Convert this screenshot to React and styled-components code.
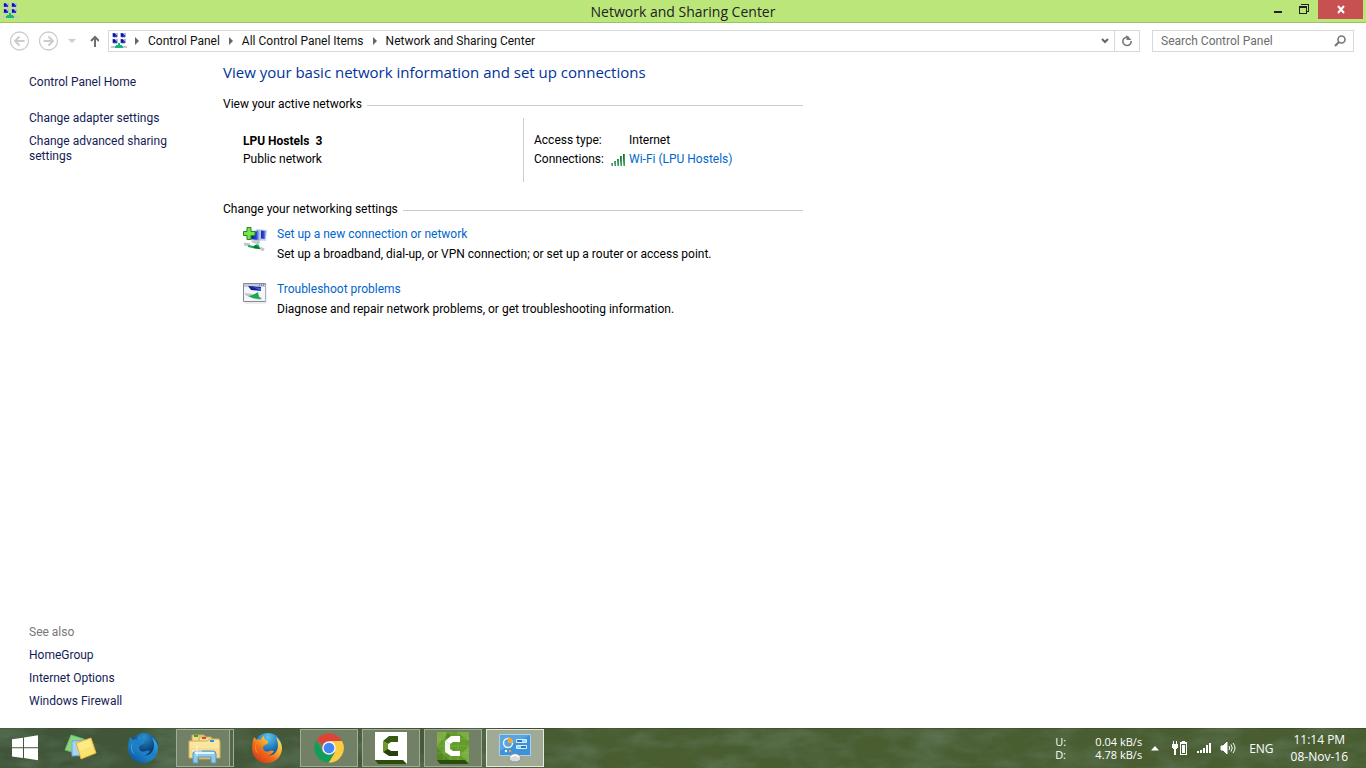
import React from 'react'
import styled, { createGlobalStyle } from 'styled-components'

const tasks = [
  { name: 'Sticky Notes', icon: <StickyIcon /> },
  { name: 'Firefox Developer', icon: <FirefoxIcon dev /> },
  { name: 'File Explorer', icon: <ExplorerIcon />, open: true, stacked: true },
  { name: 'Firefox', icon: <FirefoxIcon /> },
  { name: 'Chrome', icon: <ChromeIcon />, open: true },
  { name: 'Camtasia', icon: <CamtasiaIcon />, open: true },
  { name: 'Camtasia Recorder', icon: <CamtasiaIcon green />, open: true },
  { name: 'Control Panel', icon: <PanelIcon />, open: true, active: true },
]

export default function App() {
  return (
    <Page>
      <GlobalStyle />
      <TitleBar>
        <TitleSide>
          <NetworkIcon />
        </TitleSide>
        <Title>Network and Sharing Center</Title>
        <TitleSide $end>
          <WindowButton aria-label='Minimize'>
            <svg width='26' height='19' shapeRendering='crispEdges'>
              <path d='M10 11h8v2h-8z' fill='#222' />
            </svg>
          </WindowButton>
          <WindowButton aria-label='Restore'>
            <svg width='26' height='19' shapeRendering='crispEdges'>
              <path d='M11 4h8v8h-2v-1h1V5h-7zM9 6h8v8H9zM10 8v5h6V8z' fill='#222' fillRule='evenodd' />
            </svg>
          </WindowButton>
          <WindowButton $close aria-label='Close'>
            <svg width='45' height='19'>
              <path d='M20 6l6 7M26 6l-6 7' stroke='#fff' strokeWidth='2' />
            </svg>
          </WindowButton>
        </TitleSide>
      </TitleBar>

      <NavBar>
        <NavButton aria-label='Back'>
          <svg width='20' height='20' fill='none' stroke='#ccc'>
            <circle cx='9.5' cy='10' r='9' strokeWidth='1.3' />
            <path d='M14.500 10H6M9.500 5.5L5 10l4.500 4.5' strokeWidth='2' />
          </svg>
        </NavButton>
        <NavButton aria-label='Forward'>
          <svg width='20' height='20' fill='none' stroke='#ccc'>
            <circle cx='9.5' cy='10' r='9' strokeWidth='1.3' />
            <path d='M4.500 10H13M9.500 5.5L14 10l-4.500 4.5' strokeWidth='2' />
          </svg>
        </NavButton>
        <NavButton aria-label='Recent locations'>
          <svg width='8' height='4'>
            <path d='M0 0h8L4 4z' fill='#ccc' />
          </svg>
        </NavButton>
        <NavButton $up aria-label='Up'>
          <svg width='10' height='12' fill='none' stroke='#6e6e6e' strokeWidth='2'>
            <path d='M6 12V2M2 6l4-4 4 4' />
          </svg>
        </NavButton>
        <Address>
          <NetworkIcon />
          <Crumb name='Control Panel' />
          <Crumb name='All Control Panel Items' />
          <Crumb name='Network and Sharing Center' />
          <Spacer />
          <AddressButton aria-label='Previous locations'>
            <svg width='8' height='6' fill='none' stroke='#666' strokeWidth='2'>
              <path d='M1 1l3 3 3-3' />
            </svg>
          </AddressButton>
          <AddressButton $line aria-label='Refresh'>
            <svg width='12' height='12' fill='none' stroke='#777' strokeWidth='1.6'>
              <path d='M8 2.600A4.200 4.200 0 1 0 10.200 6' />
              <path d='M5.500 0v5h5z' fill='#777' stroke='none' />
            </svg>
          </AddressButton>
        </Address>
        <Search>
          <SearchInput type='text' aria-label='Search Control Panel' placeholder='Search Control Panel' />
          <svg width='12' height='12' fill='none' stroke='#777'>
            <circle cx='7.5' cy='4.5' r='3.5' strokeWidth='1.6' />
            <path d='M5 7L1 11' strokeWidth='2.2' />
          </svg>
        </Search>
      </NavBar>

      <Content>
        <Sidebar>
          <SideGroup>
            <SideLink href='#' $first>Control Panel Home</SideLink>
            <SideLink href='#'>Change adapter settings</SideLink>
            <SideLink href='#'>Change advanced sharing settings</SideLink>
          </SideGroup>
          <SideGroup>
            <SeeAlso>See also</SeeAlso>
            <SideLink href='#'>HomeGroup</SideLink>
            <SideLink href='#'>Internet Options</SideLink>
            <SideLink href='#'>Windows Firewall</SideLink>
          </SideGroup>
        </Sidebar>

        <Main>
          <Heading>View your basic network information and set up connections</Heading>
          <SectionTitle>View your active networks</SectionTitle>
          <Network>
            <NetworkName>
              <b>LPU Hostels&nbsp; 3</b>
              <span>Public network</span>
            </NetworkName>
            <Details>
              <dt>Access type:</dt>
              <dd>Internet</dd>
              <dt>Connections:</dt>
              <dd>
                <Wifi />
                <BlueLink href='#'>Wi-Fi (LPU Hostels)</BlueLink>
              </dd>
            </Details>
          </Network>

          <SectionTitle>Change your networking settings</SectionTitle>
          <Option>
            <NewConnectionIcon />
            <div>
              <BlueLink href='#'>Set up a new connection or network</BlueLink>
              <OptionText>Set up a broadband, dial-up, or VPN connection; or set up a router or access point.</OptionText>
            </div>
          </Option>
          <Option>
            <TroubleshootIcon />
            <div>
              <BlueLink href='#'>Troubleshoot problems</BlueLink>
              <OptionText>Diagnose and repair network problems, or get troubleshooting information.</OptionText>
            </div>
          </Option>
        </Main>
      </Content>

      <Taskbar>
        <Wallpaper>
          <filter id='grain' x='0' y='0' width='100%' height='100%' colorInterpolationFilters='sRGB'>
            <feTurbulence type='fractalNoise' baseFrequency='.02 .05' numOctaves='6' seed='4' />
            <feColorMatrix values='0 0 0 0 .42  0 0 0 0 .52  0 0 0 0 .42  1.6 0 0 0 -.62' />
          </filter>
          <rect width='100%' height='100%' filter='url(#grain)' />
        </Wallpaper>
        <StartButton aria-label='Start'>
          <svg width='26' height='26' fill='#fff'>
            <path d='M0 4.200l11-1.500v9.500H0zM12 2.500L26 .3v11.900H12zM0 13.200h11v9.700L0 21.500zM12 13.200h14v12L12 23z' />
          </svg>
        </StartButton>
        {tasks.map((task) => (
          <Task key={task.name} aria-label={task.name} $open={task.open} $active={task.active}>
            {task.icon}
            {task.stacked && <Stack />}
          </Task>
        ))}
        <Spacer />
        <Speed>
          <span>U:</span>
          <span>0.04 kB/s</span>
          <span>D:</span>
          <span>4.78 kB/s</span>
        </Speed>
        <Tray>
          <svg width='8' height='5'>
            <path d='M4 0l4 4.500H0z' fill='#fff' />
          </svg>
          <svg width='16' height='16' fill='#fff' shapeRendering='crispEdges'>
            <path d='M1 1h1v3h2V1h1v3h1v4H5v1H4v6H2V9H1V8H0V4h1z' />
            <path d='M10 1h3v1h2v13H8V2h2zM9 4v10h5V4z' fillRule='evenodd' />
            <path d='M10 5h3v8h-3z' />
          </svg>
          <svg width='16' height='12' fill='#fff' shapeRendering='crispEdges'>
            <path d='M1 9h2v2H1zM4 8h2v3H4zM7 6h2v5H7zM10 3h2v8h-2zM13 1h2v10h-2z' />
          </svg>
          <svg width='16' height='14' fill='none' stroke='#fff'>
            <path d='M1 5h2l4-4v12L3 9H1z' fill='#fff' />
            <path d='M9 5q1.500 2 0 4M11 3.500q2.500 3.500 0 7M13 2q4 5 0 10' />
          </svg>
        </Tray>
        <Language>ENG</Language>
        <Clock>
          <span>11:14 PM</span>
          <span>08-Nov-16</span>
        </Clock>
      </Taskbar>
    </Page>
  )
}

function Crumb({ name }) {
  return (
    <>
      <svg width='4' height='8'>
        <path d='M0 0l4 4-4 4z' fill='#666' />
      </svg>
      <CrumbLink href='#'>{name}</CrumbLink>
    </>
  )
}

function NetworkIcon() {
  return (
    <svg width='16' height='16' shapeRendering='crispEdges'>
      {[[1, 0], [9, 0], [1, 6], [9, 6]].map(([x, y]) => (
        <g key={`${x}-${y}`}>
          <path d={`M${x} ${y}h6v4h-6z`} fill='#b3b6cc' />
          <path d={`M${x + 1} ${y}h4v4h-4z`} fill='#2a36c4' />
          <path d={`M${x + 1} ${y + 1}h2v2h-2z`} fill='#0c109c' />
          <path d={`M${x + 3} ${y}h2v2h-1v-1h-1z`} fill='#a9b6f0' />
          <path d={`M${x + 1} ${y + 4}h4v1h-4z`} fill='#c9cad4' />
        </g>
      ))}
      <path d='M0 13h16v2H0z' fill='#c6c8ce' />
      <path d='M7 10h2v2h2v1h1v2H4v-2h1v-1h2z' fill='#12b878' />
    </svg>
  )
}

function Wifi() {
  return (
    <svg width='14' height='12' shapeRendering='crispEdges'>
      <defs>
        <linearGradient id='bars' x1='0' y1='0' x2='0' y2='12' gradientUnits='userSpaceOnUse'>
          <stop stopColor='#126b36' />
          <stop offset='.4' stopColor='#1d7a41' />
          <stop offset='1' stopColor='#8fd3a2' />
        </linearGradient>
      </defs>
      <path d='M0 9h2v3H0zM3 7h2v5H3zM6 5h2v7H6zM9 2h2v10H9zM12 0h2v12h-2z' fill='url(#bars)' />
      <path d='M1 9v3M4 7v5M7 5v7M10 2v10M13 0v12' stroke='#3d9a5c' />
    </svg>
  )
}

function NewConnectionIcon() {
  return (
    <svg width='24' height='24'>
      <defs>
        <linearGradient id='screen' x2='1'>
          <stop stopColor='#0b1690' />
          <stop offset='.7' stopColor='#263fd0' />
          <stop offset='1' stopColor='#8fb2f5' />
        </linearGradient>
      </defs>
      <path d='M13 2l11 1-1 11-9-1z' fill='#c9d4e8' />
      <path d='M14 3l9 1-1 8-8-1z' fill='url(#screen)' />
      <path d='M6 4l12-1v10l-2 2-9-2z' fill='#b8c4dc' />
      <path d='M7 5l9-1v9l-8-1z' fill='url(#screen)' />
      <path d='M8 14l9 1-1 2-6-1z' fill='#bcbfc8' />
      <path d='M1 17l6 1M17 21l4 2' stroke='#c2c5ca' strokeWidth='3' />
      <path d='M5 18l6 1 3-2 2 1 1 4-8-1-4-1z' fill='#19b452' />
      <path d='M12 18l5 3v1l-7-1z' fill='#087535' />
      <path d='M4 .5h4v4h4v4H8v4H4v-4H.5v-4H4z' fill='#7de04c' stroke='#218a1c' />
    </svg>
  )
}

function TroubleshootIcon() {
  return (
    <svg width='24' height='24' viewBox='0 -1 24 24'>
      <path d='M.5.5h22v18H.5z' fill='#f5f6f8' stroke='#7f8a96' />
      <path d='M1 1h21v3H1z' fill='#c4cbd5' />
      <path d='M16 2h1M18 2h1M20 2h1' stroke='#33519b' />
      <path d='M5 3l13 1v4l-10-1z' fill='#16209c' />
      <path d='M10 4l8 1v3z' fill='#405ed9' />
      <path d='M2 10l9 1 8 4-1 2-7-1-9-4z' fill='#c3c8ce' />
      <path d='M5 13l5-1 5-3 1 5 2 1-1 1-7-1z' fill='#18ab4e' />
      <path d='M2 20h21V2' fill='none' stroke='#ddd' />
    </svg>
  )
}

function StickyIcon() {
  return (
    <svg width='34' height='28'>
      <path d='M7 1l13 4-5 15L1 16z' fill='#8bd780' stroke='#6bb764' />
      <path d='M8 7l14-1 1 15-15 1z' fill='#a7d3f5' stroke='#6ea9d8' />
      <path d='M12 9l15-5 5 15-15 6z' fill='#fbe36d' stroke='#d9b63c' />
      <path d='M13 10l13-5 2 7-12 5z' fill='#fff09b' opacity='.6' />
    </svg>
  )
}

function FirefoxIcon({ dev }) {
  const id = dev ? 'dev' : 'fox'
  return (
    <svg width='32' height='32' viewBox='0 0 32 32'>
      <defs>
        <radialGradient id={`${id}-globe`} cx='.5' cy='.15' r='.85'>
          <stop stopColor={dev ? '#2a93cf' : '#5dc7ed'} />
          <stop offset='.6' stopColor={dev ? '#0b3f7b' : '#1667ad'} />
          <stop offset='1' stopColor='#0a2f6b' />
        </radialGradient>
        <linearGradient id={`${id}-fur`} x1='.9' y1='.1' x2='.2' y2='.9'>
          <stop stopColor={dev ? '#3fa9df' : '#ffe05a'} />
          <stop offset='.4' stopColor={dev ? '#1d7fc4' : '#f8a52b'} />
          <stop offset='.65' stopColor={dev ? '#1d7fc4' : '#ee6a1c'} />
          <stop offset='1' stopColor={dev ? '#0c5da5' : '#d83f17'} />
        </linearGradient>
      </defs>
      <circle cx='17' cy='15' r='14' fill={`url(#${id}-globe)`} />
      <path
        d='M3 5c1 1 2 2 3 3 1-1 3-1 4 0 0-2 1-3 3-4 0 3 1 4 4 5 1 2-1 3-3 4-3 1-2 5 0 6 4 2 5-2 9 0-2 3-4 5-8 4 7 2 12-3 12-10 0-3-1-6-2-8 4 3 6 7 6 11 0 8-6 15-15 15S1 24 1 16c0-4 1-8 2-11z'
        fill={`url(#${id}-fur)`}
      />
      <path d='M6 10c-2 4-1 9 2 12-4-1-6-7-2-12z' fill={dev ? '#58b4e4' : '#f9a338'} opacity='.6' />
    </svg>
  )
}

function ExplorerIcon() {
  return (
    <svg width='34' height='31'>
      <path d='M4 2h12l2 3v20H4z' fill='#f4dc88' stroke='#c9a64d' />
      <path d='M11 4h12l2 3v19H11z' fill='#f6e19a' stroke='#c9a64d' />
      <path d='M6 2h4v2H6z' fill='#24a645' />
      <path d='M14 4h4v2h-4z' fill='#d84731' />
      <path d='M1 8h18l3-2h9l1 3v16H1z' fill='#f9e6a0' stroke='#d0ad57' />
      <path d='M22 7h4v2h-4z' fill='#2c94df' />
      <path d='M2 15h29v10H2z' fill='#efcd72' opacity='.4' />
      <path d='M5 30V21q0-3 3-3h17q3 0 3 3v9h-5v-6H10v6z' fill='#8ecbef' stroke='#5796c2' />
      <path d='M7 20h19' stroke='#dff4ff' strokeWidth='2' />
      <path d='M9 13v10M4 18h10' stroke='#fff' opacity='.8' />
    </svg>
  )
}

function ChromeIcon() {
  return (
    <svg width='30' height='30' viewBox='0 0 30 30'>
      <path d='M15 15L2.300 7.500A14.700 14.700 0 0 1 27.700 7.500z' fill='#dc4437' />
      <path d='M15 8h13a14.700 14.700 0 0 1-13.500 21.700L21 19z' fill='#fdcd40' />
      <path d='M2.300 7.500L9 19l6 3-.5 7.700A14.700 14.700 0 0 1 2.300 7.500z' fill='#129d58' />
      <path d='M9 19q6 5 12 0l-6.500 10.700z' fill='#129d58' />
      <circle cx='15' cy='15' r='6.800' fill='#f3f3f3' />
      <circle cx='15' cy='15' r='5.300' fill='#4285f4' />
    </svg>
  )
}

function CamtasiaIcon({ green }) {
  return (
    <svg width='32' height='32'>
      <path d='M0 28h28l4 4H3z' fill='#2c4c0b' />
      <path d='M0 0h32v32l-4-4H0z' fill={green ? '#649c2b' : '#fff'} />
      {green && (
        <>
          <path d='M0 0h12L0 14zM20 0h12v9zM32 14v16l-9-7z' fill='#8dbb55' opacity='.6' />
          <path d='M0 16l12 12H0zM10 0l7 5-9 6z' fill='#477d1b' opacity='.6' />
          <path d='M0 7h32M0 14h32M0 21h32M7 0v28M14 0v28M21 0v28' stroke='#9dc96c' opacity='.3' />
        </>
      )}
      <path d='M23 4v6h-7l-3 2-5-3 6-5z' fill={green ? '#fff' : '#375b12'} />
      <path d='M8 9l5 3v6l-5 2z' fill={green ? '#f2f5ed' : '#6d9a2b'} />
      <path d='M8 20l5-3 3 2h7v5h-9z' fill={green ? '#fff' : '#26420c'} />
    </svg>
  )
}

function PanelIcon() {
  return (
    <svg width='32' height='30'>
      <path d='M.5 1.500h31v21H.5z' fill='#3f92d7' stroke='#a6d2f0' />
      <path d='M1 2h30L1 18z' fill='#75b7e8' opacity='.5' />
      <circle cx='9' cy='10' r='4.500' fill='none' stroke='#e4f4ff' strokeWidth='1.500' />
      <path d='M9 4a6 6 0 0 1 5 6H9z' fill='#f9a62c' />
      <path d='M17.500 6.500h10v3h-10zM17.500 12.500h10v3h-10z' fill='#287ac0' stroke='#d8efff' />
      <path d='M23 7h4v2h-4zM18 13h4v2h-4z' fill='#9ed8fa' />
      <circle cx='7' cy='18' r='1.200' fill='#fff' />
      <circle cx='11' cy='18' r='1.200' fill='#f9a62c' />
      <ellipse cx='16' cy='25' rx='6' ry='4' fill='#d9dcde' stroke='#8d9498' />
      <path d='M12 24q4-4 8 0' fill='none' stroke='#fff' strokeWidth='1.500' />
    </svg>
  )
}

const GlobalStyle = createGlobalStyle`
  * {
    box-sizing: border-box;
  }
  body {
    margin: 0;
    background: #fff;
    color: #000;
    font: 12px/15px Roboto, 'Open Sans', sans-serif;
  }
  a {
    text-decoration: none;
  }
  button {
    border: 0;
    padding: 0;
    background: none;
    display: flex;
    align-items: center;
    justify-content: center;
  }
  svg {
    display: block;
    flex: none;
  }
`

const Page = styled.div`
  min-height: 100vh;
  display: flex;
  flex-direction: column;
`

const Spacer = styled.div`
  flex: 1;
`

const TitleBar = styled.header`
  display: grid;
  grid-template-columns: 1fr auto 1fr;
  height: 23px;
  background: #bbe77a;
  border-bottom: 1px solid #9cc261;
`

const TitleSide = styled.div`
  display: flex;
  justify-content: ${(p) => (p.$end ? 'flex-end' : 'flex-start')};
  padding: ${(p) => (p.$end ? '0 3px 0 0' : '3px 2px 0')};
`

const Title = styled.h1`
  margin: 0;
  font-family: 'Open Sans', sans-serif;
  font-size: 14px;
  font-weight: 400;
  line-height: 23px;
  color: #222;
`

const WindowButton = styled.button`
  height: 19px;
  background: ${(p) => (p.$close ? '#c75050' : 'none')};
  margin-left: ${(p) => (p.$close ? '2px' : '0')};
`

const NavBar = styled.nav`
  display: flex;
  align-items: center;
  height: 36px;
  padding: 0 12px 0 10px;
  gap: 9px;
`

const NavButton = styled.button`
  min-width: ${(p) => (p.$up ? '10px' : '8px')};
  margin-left: ${(p) => (p.$up ? '4px' : '0')};
`

const Address = styled.div`
  display: flex;
  align-items: center;
  flex: 1;
  height: 22px;
  margin-right: 3px;
  padding-left: 2px;
  border: 1px solid #d9d9d9;

  & > svg + svg {
    margin-left: 8px;
  }
`

const CrumbLink = styled.a`
  margin: 0 9px;
  color: #111;
`

const AddressButton = styled.button`
  width: ${(p) => (p.$line ? '25px' : '18px')};
  height: 20px;
  border-left: ${(p) => (p.$line ? '1px solid #d9d9d9' : '0')};
`

const Search = styled.div`
  display: flex;
  align-items: center;
  width: 202px;
  height: 22px;
  padding: 0 7px 0 8px;
  border: 1px solid #d9d9d9;
`

const SearchInput = styled.input`
  flex: 1;
  min-width: 0;
  padding: 0;
  border: 0;
  outline: 0;
  font: inherit;
  &::placeholder {
    color: #6d6d6d;
    opacity: 1;
  }
`

const Content = styled.div`
  display: flex;
  flex: 1;
`

const Sidebar = styled.aside`
  display: flex;
  flex-direction: column;
  justify-content: space-between;
  width: 223px;
  padding: 16px 40px 19px 29px;
`

const SideGroup = styled.div`
  display: flex;
  flex-direction: column;
  align-items: flex-start;
  gap: 8px;
`

const SideLink = styled.a`
  color: #151c55;
  margin-bottom: ${(p) => (p.$first ? '13px' : '0')};
`

const SeeAlso = styled.span`
  color: #777;
`

const Main = styled.main`
  flex: 1;
  max-width: 580px;
  padding-top: 4px;
`

const Heading = styled.h2`
  margin: 0 0 15px;
  font-family: 'Open Sans', sans-serif;
  font-size: 15px;
  font-weight: 400;
  line-height: 18px;
  color: #003399;
  white-space: nowrap;
`

const SectionTitle = styled.h3`
  display: flex;
  align-items: center;
  gap: 5px;
  margin: 0;
  font-size: 12px;
  font-weight: 400;
  line-height: 16px;

  &::after {
    content: '';
    flex: 1;
    height: 1px;
    margin-top: 2px;
    background: #ccc;
  }
`

const Network = styled.div`
  display: grid;
  grid-template-columns: 280px 1fr;
  height: 64px;
  margin: 6px 0 19px 20px;
`

const NetworkName = styled.div`
  display: flex;
  flex-direction: column;
  gap: 3px;
  padding-top: 16px;
`

const Details = styled.dl`
  display: grid;
  grid-template-columns: 95px 1fr;
  align-content: start;
  row-gap: 4px;
  margin: 0;
  padding: 15px 0 0 10px;
  border-left: 1px solid #ccc;

  dd {
    display: flex;
    align-items: center;
    margin: 0;
  }
  svg {
    margin: 0 4px 0 -18px;
  }
`

const BlueLink = styled.a`
  color: #0066cc;
`

const Option = styled.div`
  display: flex;
  gap: 10px;
  min-height: 55px;
  padding: 10px 0 0 20px;
  white-space: nowrap;
`

const OptionText = styled.p`
  margin: 5px 0 0;
`

const Taskbar = styled.footer`
  position: relative;
  isolation: isolate;
  display: flex;
  align-items: center;
  height: 40px;
  padding-right: 18px;
  box-shadow: inset 0 1px #3c4c2c;
  color: #fff;
  font-family: 'Open Sans', sans-serif;
  background: linear-gradient(90deg, #3f5438, #465a38 30%, #495d31 45%, #495d31);
`

const Wallpaper = styled.svg`
  position: absolute;
  z-index: -1;
  inset: 0;
  width: 100%;
  height: 100%;
  opacity: 0.7;
`

const StartButton = styled.button`
  width: 50px;
  height: 40px;
`

const Task = styled.button`
  position: relative;
  width: 58px;
  height: 38px;
  margin: 0 2px;
  border: ${(p) => (p.$open ? '1px solid' : '0')};
  border-color: ${(p) => (p.$active ? '#e5e9e1' : '#a0ab98')};
  background: ${(p) => (p.$active ? '#a0aa95' : p.$open ? '#728166' : 'none')};
`

const Stack = styled.span`
  position: absolute;
  top: 0;
  right: 0;
  bottom: 0;
  width: 4px;
  border-left: 1px solid #a0ab98;
  background: #53664a;
`

const Speed = styled.div`
  display: grid;
  grid-template-columns: 30px 57px;
  font-size: 11px;
  line-height: 13px;

  span:nth-child(even) {
    text-align: right;
    white-space: nowrap;
  }
`

const Tray = styled.div`
  display: flex;
  align-items: center;
  gap: 8px;
  margin-left: 9px;

  svg:first-child {
    margin-right: 5px;
  }
`

const Language = styled.span`
  margin-left: 13px;
`

const Clock = styled.time`
  display: flex;
  flex-direction: column;
  align-items: center;
  gap: 2px;
  margin-left: 17px;
`
